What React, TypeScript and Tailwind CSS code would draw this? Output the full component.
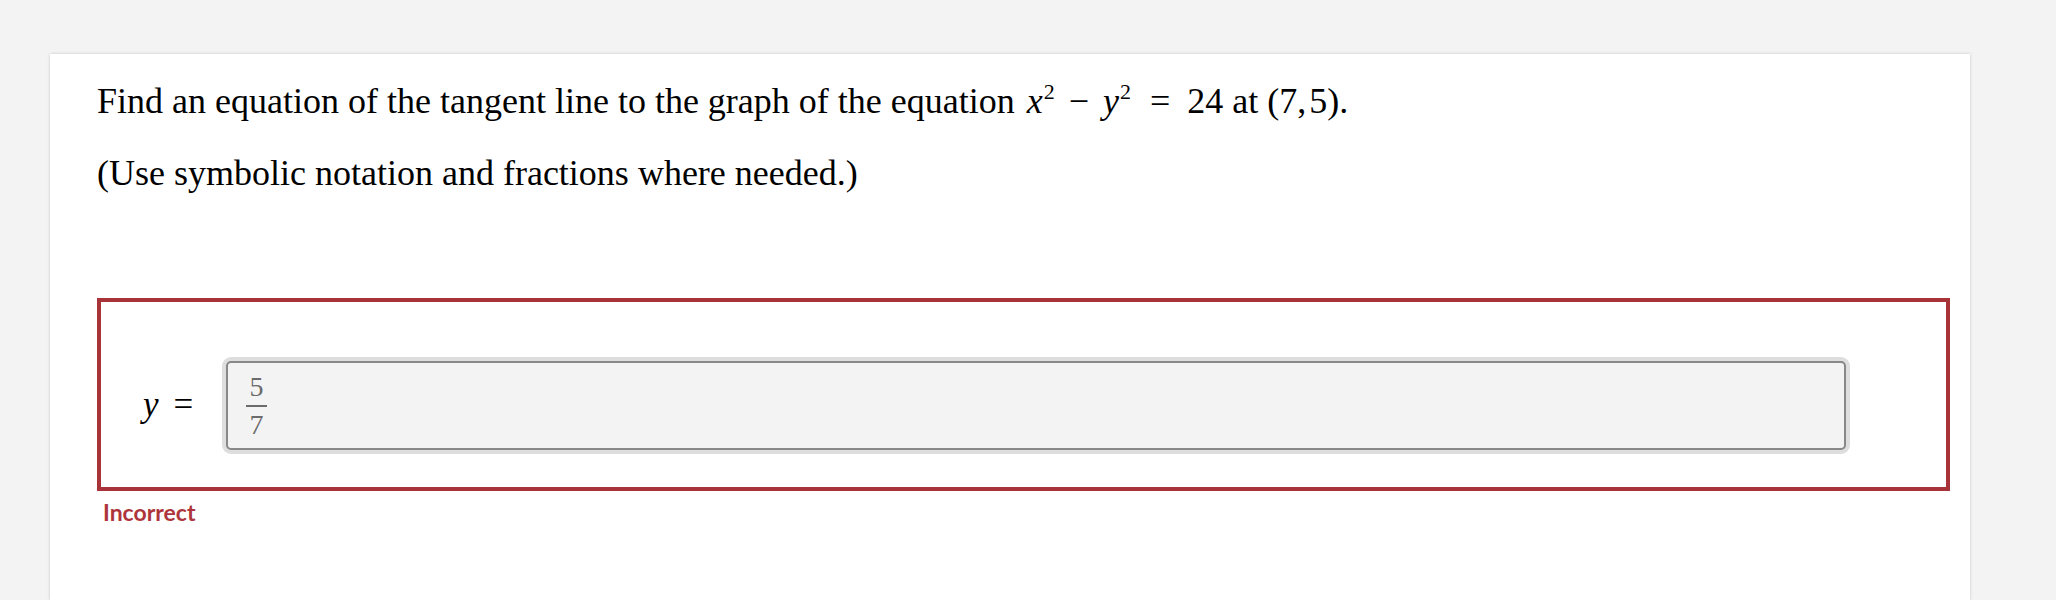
export default function App() {
  return (
    <div className="min-h-[600px] bg-[#f3f3f3] pt-[54px] pl-[50px] pr-[86px] font-['Liberation_Serif',serif]">
      <div className="min-h-[546px] bg-white shadow-[0_0_3px_rgba(0,0,0,0.18)] pl-[47px] pr-[20px] pt-[23px]">
        <p className="text-[36px] leading-[48px] text-black">
          Find an equation of the tangent line to the graph of the equation{" "}
          <span className="italic ml-[3px]">x</span>
          <sup className="text-[22px] relative -top-[14px] ml-[1px]">2</sup>
          <span className="mx-[14px]">−</span>
          <span className="italic">y</span>
          <sup className="text-[22px] relative -top-[14px] ml-[1px]">2</sup>
          <span className="ml-[19px] mr-[17px]">=</span>
          24 at (7,<span className="ml-[3px]">5</span>).
        </p>
        <p className="mt-[24px] text-[36px] leading-[48px] text-black">
          (Use symbolic notation and fractions where needed.)
        </p>

        <div className="mt-[101px] border-4 border-[#a8343a] pt-[59px] pb-[37px] pl-[42px] pr-[100px] flex items-center">
          <div className="w-[83px] shrink-0 text-[35px] text-black">
            <span className="italic">y</span>
            <span className="ml-[15px]">=</span>
          </div>
          <div className="flex-1 h-[89px] bg-[#f3f3f3] border-2 border-[#888] rounded-[5px] ring-4 ring-[#dedede] flex items-center pl-[18px]">
            <div className="flex flex-col items-center text-[28px] leading-[30px] text-[#6b6b6b]">
              <span>5</span>
              <span className="w-[21px] h-[2px] bg-[#6b6b6b] my-[3px]" />
              <span>7</span>
            </div>
          </div>
        </div>

        <div className="mt-[7px] pl-[6px] font-['Lato',sans-serif] font-bold text-[23px] leading-[28px] text-[#ad353b]">
          Incorrect
        </div>
      </div>
    </div>
  );
}
